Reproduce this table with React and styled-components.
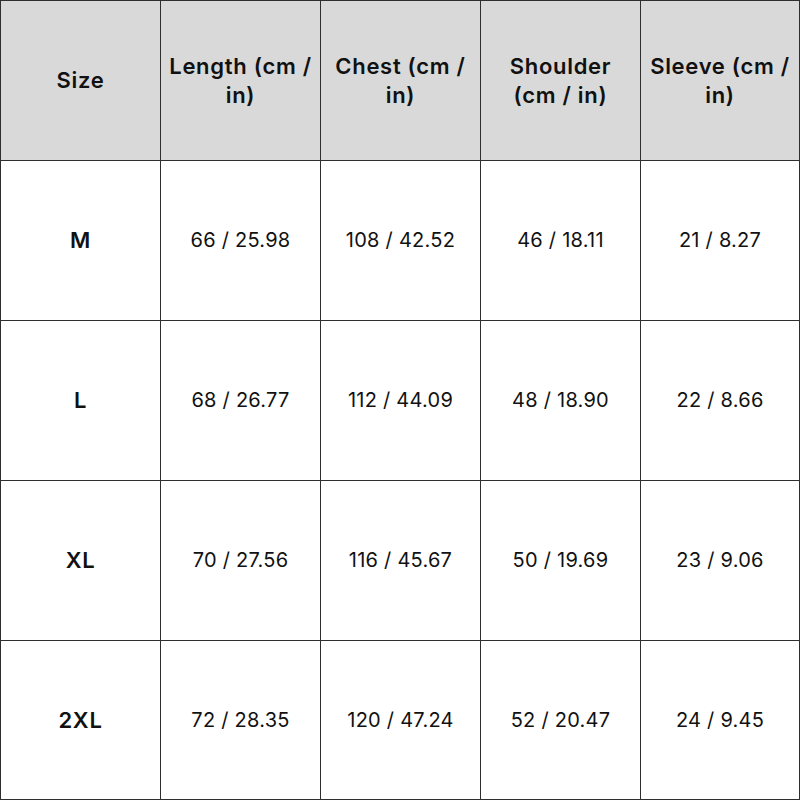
import React from "react";
import styled, { createGlobalStyle } from "styled-components";

const Global = createGlobalStyle`
  html, body { margin: 0; padding: 0; background: #ffffff; }
  body { font-family: Inter, "Liberation Sans", Arial, sans-serif; color: #111111; }
`;

const Grid = styled.div`
  display: grid;
  grid-template-columns: repeat(5, 160px);
  grid-template-rows: repeat(5, 160px);
  width: 800px;
  height: 800px;
`;

const Cell = styled.div`
  box-sizing: border-box;
  display: flex;
  align-items: center;
  justify-content: center;
  text-align: center;
  padding: 0 8px;
  border-top: 1px solid #2e2e2e;
  border-left: 1px solid #2e2e2e;
  border-right: ${(p) => (p.$lastCol ? "1px solid #2e2e2e" : "none")};
  border-bottom: ${(p) => (p.$lastRow ? "1px solid #2e2e2e" : "none")};
  background: ${(p) => (p.$head ? "#d9d9d9" : "#ffffff")};
  font-size: ${(p) => (p.$head || p.$size ? "22px" : "20px")};
  font-weight: ${(p) => (p.$head || p.$size ? 600 : 400)};
  line-height: 29px;
  letter-spacing: ${(p) => (p.$head || p.$size ? "0.7px" : "0.25px")};
`;

const headers = ["Size", "Length (cm / in)", "Chest (cm / in)", "Shoulder (cm / in)", "Sleeve (cm / in)"];
const rows = [
  ["M", "66 / 25.98", "108 / 42.52", "46 / 18.11", "21 / 8.27"],
  ["L", "68 / 26.77", "112 / 44.09", "48 / 18.90", "22 / 8.66"],
  ["XL", "70 / 27.56", "116 / 45.67", "50 / 19.69", "23 / 9.06"],
  ["2XL", "72 / 28.35", "120 / 47.24", "52 / 20.47", "24 / 9.45"],
];

export default function App() {
  return (
    <>
      <Global />
      <Grid>
        {headers.map((h, i) => (
          <Cell key={h} $head $lastCol={i === 4}>
            {h}
          </Cell>
        ))}
        {rows.map((r, ri) =>
          r.map((v, ci) => (
            <Cell
              key={ri + "-" + ci}
              $size={ci === 0}
              $lastCol={ci === 4}
              $lastRow={ri === rows.length - 1}
            >
              {v}
            </Cell>
          ))
        )}
      </Grid>
    </>
  );
}
